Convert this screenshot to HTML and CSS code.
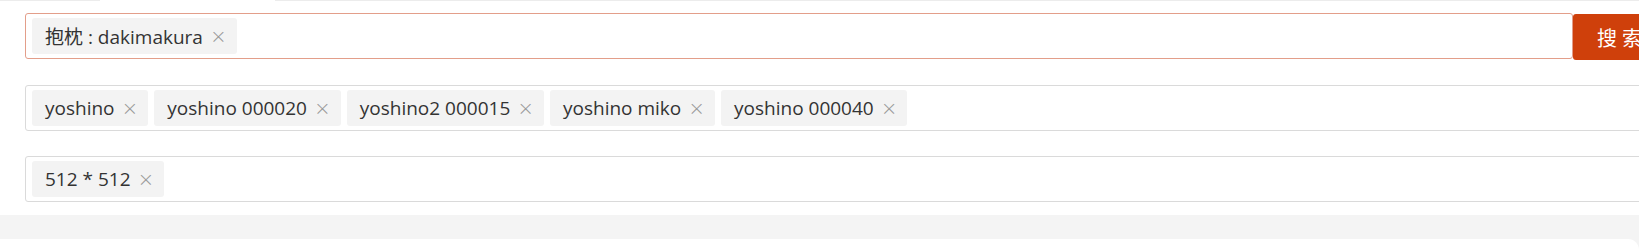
FILE: index.html
```html
<!DOCTYPE html>
<html lang="zh">
<head>
<meta charset="utf-8">
<title>Search</title>
<link rel="stylesheet" href="styles.css">
</head>
<body>
<div class="topline"><span class="seg a"></span><span class="seg gap"></span><span class="seg b"></span></div>
<div class="panel">
  <div class="row first">
    <div class="field active">
      <span class="tag">抱枕 : dakimakura<span class="x">×</span></span>
    </div>
    <button class="btn">搜索</button>
  </div>
  <div class="row">
    <div class="field wide">
      <span class="tag">yoshino<span class="x">×</span></span>
      <span class="tag">yoshino 000020<span class="x">×</span></span>
      <span class="tag">yoshino2 000015<span class="x">×</span></span>
      <span class="tag">yoshino miko<span class="x">×</span></span>
      <span class="tag">yoshino 000040<span class="x">×</span></span>
    </div>
  </div>
  <div class="row">
    <div class="field wide">
      <span class="tag">512 * 512<span class="x">×</span></span>
    </div>
  </div>
</div>
<div class="band"></div>
<div class="foot"></div>
</body>
</html>
```
FILE: styles.css
```css
html, body {
  margin: 0;
  padding: 0;
  overflow: hidden;
  background: #f4f4f4;
}
body {
  width: 1639px;
  height: 250px;
  font-family: "Open Sans", "Noto Sans CJK SC", sans-serif;
  color: #333;
}
.topline {
  display: flex;
  height: 1px;
  background: #fff;
}
.seg.a { width: 100px; background: #ececec; }
.seg.gap { width: 175px; background: #fff; }
.seg.b { flex: 1; background: #ececec; }
.panel {
  background: #fff;
  padding: 12px 0 13px 25px;
  display: flex;
  flex-direction: column;
  gap: 25px;
}
.row {
  display: flex;
  align-items: center;
  height: 46px;
  white-space: nowrap;
}
.row.first {
  margin-bottom: 1px;
}
.field {
  box-sizing: border-box;
  height: 46px;
  border: 1px solid #dadada;
  border-radius: 3px;
  padding: 5px 6px;
  display: flex;
  align-items: center;
  gap: 6px;
  background: #fff;
  flex: none;
}
.field.active {
  width: 1548px;
  border-color: #e39e8a;
}
.field.wide {
  width: 1660px;
}
.tag {
  display: inline-flex;
  align-items: center;
  height: 36px;
  box-sizing: border-box;
  padding: 0 10px 0 13px;
  background: #f3f3f3;
  border-radius: 3px;
  font-size: 19px;
  color: #333;
}
.x {
  color: #999;
  font-family: "DejaVu Sans", sans-serif;
  font-size: 20px;
  font-weight: 300;
  margin-left: 7px;
}
.btn {
  flex: none;
  height: 46px;
  width: 90px;
  margin-left: 0;
  border: none;
  border-radius: 3px;
  background: #cf400b;
  color: #fff;
  font-family: "Noto Sans CJK SC", sans-serif;
  font-size: 20px;
  letter-spacing: 5px;
  text-align: left;
  padding: 0 0 0 24px;
  position: relative;
  top: 1px;
}
.band {
  height: 24px;
  background: #f4f4f4;
}
.foot {
  height: 11px;
  background: #fff;
  border-top-right-radius: 20px;
}
```
